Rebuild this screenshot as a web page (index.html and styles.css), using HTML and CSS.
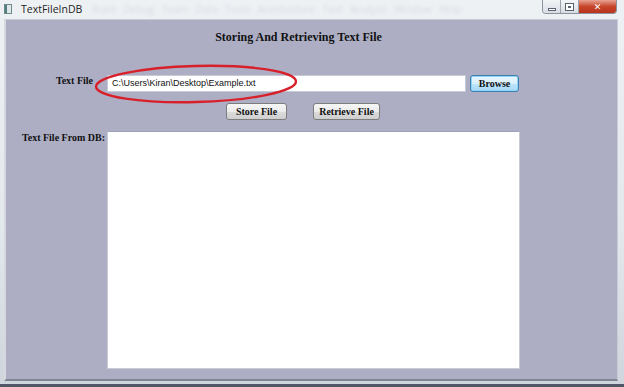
FILE: index.html
```html
<!DOCTYPE html>
<html lang="en">
<head>
  <meta charset="UTF-8" />
  <title>TextFileInDB</title>
  <link rel="stylesheet" href="styles.css">
</head>
<body>
  <div class="window">
    <!-- Title bar -->
    <div class="titlebar">
      <span class="app-icon"></span>
      <span class="app-title">TextFileInDB</span>
      <div class="behind">Build &nbsp; Debug &nbsp; Team &nbsp; Data &nbsp; Tools &nbsp; Architecture &nbsp; Test &nbsp; Analyze &nbsp; Window &nbsp; Help</div>
      <div class="controls">
        <span class="ctl min"><i></i></span>
        <span class="ctl max"><i></i></span>
        <span class="ctl close">&#x2715;</span>
      </div>
    </div>

    <!-- Client area -->
    <div class="client">
      <h1 class="heading">Storing And Retrieving Text File</h1>

      <div class="row file-row">
        <label class="field-label">Text File</label>
        <div class="textbox">C:\Users\Kiran\Desktop\Example.txt</div>
        <button class="btn btn-focus">Browse</button>
      </div>

      <div class="row button-row">
        <button class="btn store">Store File</button>
        <button class="btn retrieve">Retrieve File</button>
      </div>

      <div class="row db-row">
        <label class="db-label">Text File From DB:</label>
        <div class="textarea"></div>
      </div>

      <!-- red marker drawn over the path box -->
      <svg class="marker" width="210" height="46" viewBox="0 0 210 46">
        <ellipse cx="102" cy="22" rx="100" ry="18" fill="none" stroke="#d8202a" stroke-width="2.4" transform="rotate(-1.5 102 22)"/>
      </svg>
    </div>
  </div>
</body>
</html>
```

FILE: styles.css
```css
* {
  box-sizing: border-box;
}

body {
  margin: 0;
  width: 624px;
  height: 387px;
  overflow: hidden;
  background: #dfe4ea;
}

.window {
  width: 624px;
  height: 387px;
  display: flex;
  flex-direction: column;
  background: linear-gradient(to bottom, #eef1f4 0%, #e3e8ed 60%, #cfd5dc 100%);
  border-bottom: 3px solid #4f5866;
}

.titlebar {
  position: relative;
  height: 19px;
  display: flex;
  align-items: flex-start;
  padding-left: 4px;
}

.app-icon {
  width: 8px;
  height: 10px;
  margin-top: 4px;
  background: linear-gradient(to right, #4f7f80 0 40%, #dfe7e8 40%);
  border: 1px solid #6c8a8c;
}

.app-title {
  margin-left: 9px;
  margin-top: 2px;
  font-family: "Open Sans", sans-serif;
  font-size: 10.5px;
  color: #1d1d1d;
}

.behind {
  position: absolute;
  left: 92px;
  top: 2px;
  font-family: "Open Sans", sans-serif;
  font-size: 10px;
  color: rgba(60, 70, 80, 0.12);
  filter: blur(1.4px);
  white-space: nowrap;
}

.controls {
  margin-left: auto;
  margin-right: 7px;
  display: flex;
  border: 1px solid #8b939d;
  border-top: none;
  border-radius: 0 0 4px 4px;
  overflow: hidden;
}

.ctl {
  height: 13px;
  display: flex;
  align-items: center;
  justify-content: center;
  background: linear-gradient(to bottom, #f3f5f7, #d7dde3);
}

.ctl.min,
.ctl.max {
  width: 18px;
  border-right: 1px solid #9aa2ab;
}

.ctl.min i {
  width: 8px;
  height: 3px;
  margin-top: 5px;
  background: #fff;
  border: 1px solid #5a6470;
}

.ctl.max i {
  width: 9px;
  height: 8px;
  border: 1px solid #5a6470;
  box-shadow: inset 0 0 0 2px #fff, inset 0 0 0 3px #5a6470;
}

.ctl.close {
  width: 37px;
  background: linear-gradient(to bottom, #e8a493, #c7462b 50%, #b8331c);
  color: #fff;
  font-family: "DejaVu Sans", sans-serif;
  font-size: 9px;
  font-weight: bold;
}

.client {
  position: relative;
  flex: 1;
  margin: 0 6px 3px 4px;
  background: #adaec4;
  border: 1px solid #c9ccd6;
  border-left: 2px solid #d6d8de;
  border-bottom: 2px solid #7e8594;
}

.heading {
  margin: 9px 0 0;
  padding-right: 26px;
  text-align: center;
  font-family: "Liberation Serif", serif;
  font-size: 12px;
  line-height: 16px;
  font-weight: bold;
  color: #111;
}

.row {
  display: flex;
}

.file-row {
  margin-top: 30px;
  align-items: flex-start;
}

.field-label {
  width: 87px;
  text-align: right;
  margin-top: 0;
  font-family: "Liberation Serif", serif;
  font-size: 10px;
  font-weight: bold;
  color: #111;
}

.textbox {
  width: 359px;
  height: 17px;
  margin-left: 14px;
  padding: 2px 0 0 4px;
  background: #fff;
  border: 1px solid #c6cbd6;
  font-family: "Liberation Sans", sans-serif;
  font-size: 9px;
  color: #111;
}

.btn {
  height: 17px;
  padding: 0;
  font-family: "Liberation Serif", serif;
  font-size: 10px;
  font-weight: bold;
  color: #111;
  background: linear-gradient(to bottom, #f6f6f6 0%, #ebebeb 50%, #dcdcdc 50%, #cfcfcf 100%);
  border: 1px solid #7d7d7d;
  border-radius: 3px;
}

.btn-focus {
  width: 49px;
  margin-left: 4px;
  background: linear-gradient(to bottom, #eaf6fd 0%, #d9f0fc 50%, #bee6fd 50%, #a7d9f5 100%);
  border: 1px solid #3c7fb1;
  box-shadow: inset 0 0 0 1px #8fd4f5;
}

.button-row {
  margin-top: 11px;
  padding-left: 220px;
  gap: 26px;
}

.store {
  width: 61px;
}

.retrieve {
  width: 67px;
}

.db-row {
  margin-top: 11px;
  align-items: flex-start;
}

.db-label {
  width: 99px;
  text-align: right;
  margin-top: 1px;
  font-family: "Liberation Serif", serif;
  font-size: 10px;
  font-weight: bold;
  color: #111;
}

.textarea {
  width: 413px;
  height: 238px;
  margin-left: 2px;
  background: #fff;
  border: 1px solid #c6cbd6;
  border-top-color: #9aa3b8;
}

.marker {
  position: absolute;
  left: 88px;
  top: 42px;
}
```
